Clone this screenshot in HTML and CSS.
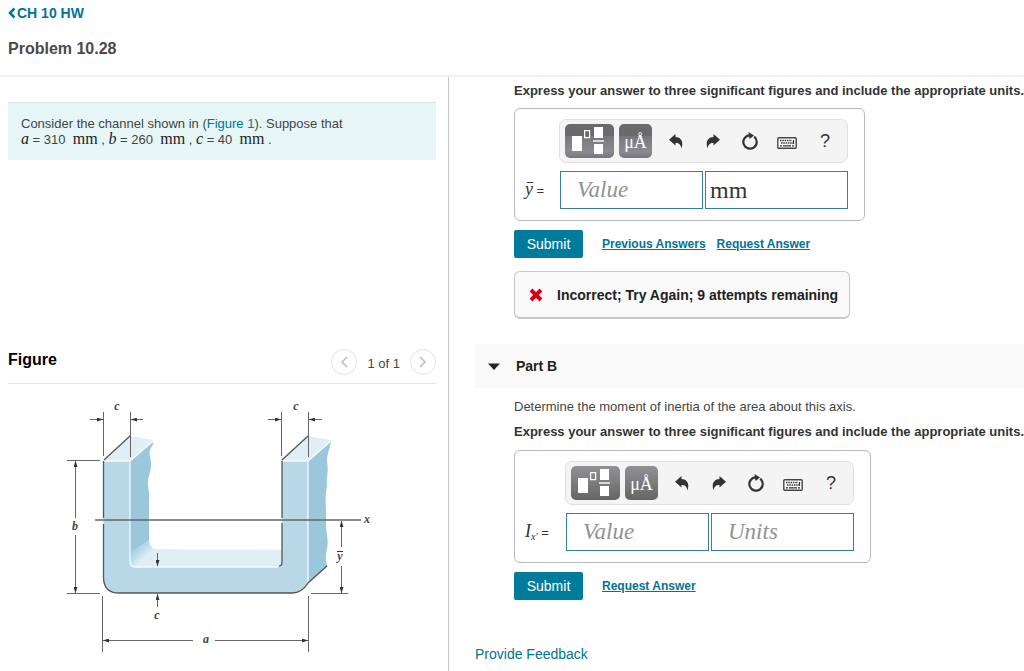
FILE: index.html
```html
<!DOCTYPE html>
<html lang="en">
<head>
<meta charset="utf-8">
<meta name="viewport" content="width=device-width, initial-scale=1">
<title>Problem 10.28</title>
<link rel="stylesheet" href="styles.css">
</head>
<body>
<svg class="sprite" aria-hidden="true">
  <symbol id="templates" viewBox="0 0 49 34">
    <path d="M7 12h10v15H7zM29 3h9v11h-9zM29 20h9v10h-9z" fill="#fff"/>
    <path d="M28 17h11" stroke="#fff" stroke-width="1.4"/>
    <path d="M19.600 6.600h5v7h-5z" fill="none" stroke="#fff" stroke-width="1.200"/>
  </symbol>
  <symbol id="undo" viewBox="0 0 14 15"><path d="M0 5.800 6.500 0v3C12 3 15 8 12.300 14.500 12 11 10.500 9 6.500 9v2.600z" fill="#333"/></symbol>
  <symbol id="redo" viewBox="0 0 14 15"><path d="M14 5.800 7.500 0v3C2 3-1 8 1.700 14.500 2 11 3.500 9 7.500 9v2.600z" fill="#333"/></symbol>
  <symbol id="reset" viewBox="0 0 18 18"><path d="M13.200 4.700A6.700 6.700 0 1 1 8.500 3.300" fill="none" stroke="#333" stroke-width="2.200"/><path d="M7.500 0 13 3.500 8.500 7z" fill="#333"/></symbol>
  <symbol id="keyboard" viewBox="0 0 20 12">
    <rect x=".8" y=".8" width="18.400" height="10.400" rx="1" fill="#fff" stroke="#444" stroke-width="1.400"/>
    <path d="M3 3.500h12M4 6h12" stroke="#333" stroke-width="1.500" stroke-dasharray="1.500 .8"/>
    <path d="M3 8.800h2M6 8.800h8M15 8.800h2M16.500 3v4" stroke="#333" stroke-width="1.300"/>
  </symbol>
</svg>

<header class="page-header">
  <a class="back" href="#"><svg class="back-icon" viewBox="0 0 8 12" aria-hidden="true"><path d="M6.500 1.500 2 6l4.500 4.500" fill="none" stroke="#007495" stroke-width="2.500"/></svg>CH 10 HW</a>
  <h1 class="title">Problem 10.28</h1>
</header>

<main class="columns">
  <section class="problem">
    <div class="prompt">
      Consider the channel shown in (<a href="#figure">Figure 1</a>). Suppose that<br>
      <var>a</var> = 310 &nbsp;<span class="unit">mm</span> , <var>b</var> = 260 &nbsp;<span class="unit">mm</span> , <var>c</var> = 40 &nbsp;<span class="unit">mm</span> .
    </div>

    <div class="figure-bar" id="figure">
      <h2 class="figure-title">Figure</h2>
      <div class="pager">
        <button class="pager-btn" type="button" aria-label="Previous figure"><svg width="8" height="12" viewBox="0 0 8 12"><path d="M7 1 2 6l5 5" fill="none" stroke="#bbb" stroke-width="1.500"/></svg></button>
        <span>1 of 1</span>
        <button class="pager-btn" type="button" aria-label="Next figure"><svg width="8" height="12" viewBox="0 0 8 12"><path d="m1 1 5 5-5 5" fill="none" stroke="#bbb" stroke-width="1.500"/></svg></button>
      </div>
    </div>

    <svg class="diagram" width="320" height="265" viewBox="60 395 320 265" role="img" aria-label="Channel cross-section with dimensions a, b, c">
      <defs>
        <marker id="arrow" viewBox="0 0 6 4" refX="6" refY="2" markerWidth="6" markerHeight="4" markerUnits="userSpaceOnUse" orient="auto-start-reverse"><path d="M0 0 6 2 0 4z" fill="#333"/></marker>
        <linearGradient id="fold" gradientUnits="userSpaceOnUse" x1="132" y1="546" x2="144" y2="559">
          <stop offset="0" stop-color="#9bc7dc"/><stop offset=".5" stop-color="#b8d9e8"/><stop offset="1" stop-color="#e0eff6"/>
        </linearGradient>
      </defs>
      <path d="M130 567V548l19-8c0 7 2 9 5 9 40 1 83 0 128 1v17z" fill="url(#fold)"/>
      <path d="M130 461 153 441c1 6-5 7-3 15 2 10 1 12-1 20-3 9 1 13 0 24v40q0 6 4 9L132 566h-2z" fill="#9bc7dc"/>
      <path d="m130 566 0-14 19-12q0 7 5 9h20l-12 18z" fill="url(#fold)"/>
      <path d="m308 461 23-20c-1 8-4 12-4 20 2 12-1 17 0 26-3 12 0 23-1 37 0 10 3 16 1 25-2 8-1 11 0 17l-19 17z" fill="#9bc7dc"/>
      <path d="M104 461 130 436l23 4v2l-23 19zM282 461l26-25 23 4v1l-23 20z" fill="#e0eff6"/>
      <path d="M103.500 461H130v101q0 5 5 5h143q4 0 4-4V461h26v122q-6 10-16 10H119q-15 0-15.500-15z" fill="#b8d7e7"/>
      <path d="M104 461h26l23-20M130 461v101q0 5 5 5h143M282 461h26l23-20M308 461v122" fill="none" stroke="#f5fbff" stroke-width="1.300"/>
      <path d="M103.500 461v57M103.500 524v54q.5 15 15.500 15h173q10 0 16-10l19-17M104 460l26-24M282 460l26-24M282 461v57M282 523v39q0 4-3 4" fill="none" stroke="#555" stroke-width="1.300"/>
      <g fill="none" stroke="#666" stroke-width="1">
        <path d="M95 520h266" stroke-width="1.300"/>
        <path d="M103.500 412v44M130.500 412v45M281.500 412v44M308.500 412v45M67 460.500h33M67 593.500h33M311 593.500h37M102.500 596v56M308.500 596v56"/>
        <g marker-end="url(#arrow)">
          <path d="M90 419.500h13"/><path d="M143 419.500h-12"/><path d="M268 419.500h13"/><path d="M322 419.500h-13"/>
          <path d="M75.500 518v-57"/><path d="M75.500 535v58"/><path d="M341.500 547v-26"/><path d="M341.500 566v27"/>
          <path d="M157.500 553v13"/><path d="M157.500 607v-13"/><path d="M193 640.500h-90"/><path d="M215 640.500h93"/>
        </g>
      </g>
      <g class="dim">
        <text x="117" y="410">c</text><text x="296" y="410">c</text><text x="75" y="530">b</text><text x="367" y="523">x</text>
        <text x="340" y="560">y</text><text x="157" y="619">c</text><text x="206" y="643">a</text>
      </g>
      <path d="M337 551.500h6" stroke="#333"/>
    </svg>
  </section>

  <section class="answers">
    <form class="part part-a">
      <p class="instruction">Express your answer to three significant figures and include the appropriate units.</p>
      <div class="answer-box">
        <label class="symbol" for="y-value"><span class="math overline">y</span> =</label>
        <div class="editor">
          <div class="toolbar">
            <button class="tool dark" type="button" aria-label="Templates"><svg width="49" height="34"><use href="#templates"/></svg></button>
            <button class="tool dark units" type="button" aria-label="Symbols">μÅ</button>
            <button class="tool" type="button" aria-label="Undo"><svg width="14" height="15"><use href="#undo"/></svg></button>
            <button class="tool" type="button" aria-label="Redo"><svg width="14" height="15"><use href="#redo"/></svg></button>
            <button class="tool" type="button" aria-label="Reset"><svg width="18" height="18"><use href="#reset"/></svg></button>
            <button class="tool" type="button" aria-label="Keyboard shortcuts"><svg class="low" width="20" height="12"><use href="#keyboard"/></svg></button>
            <button class="tool help" type="button" aria-label="Help">?</button>
          </div>
          <div class="fields">
            <input id="y-value" class="field" type="text" placeholder="Value">
            <input class="field filled" type="text" value="mm" aria-label="Units">
          </div>
        </div>
      </div>
      <div class="actions">
        <button class="submit" type="button">Submit</button>
        <a href="#">Previous Answers</a>
        <a href="#">Request Answer</a>
      </div>
      <div class="feedback" role="status">
        <svg width="14" height="14" viewBox="0 0 14 14" aria-hidden="true"><path d="m2 2 10 10M12 2 2 12" stroke="#d6001c" stroke-width="4"/></svg>
        Incorrect; Try Again; 9 attempts remaining
      </div>
    </form>

    <h2 class="part-head"><svg width="12" height="7" viewBox="0 0 12 7" aria-hidden="true"><path d="M0 .5h12L6 7z" fill="#222"/></svg>Part B</h2>

    <form class="part part-b">
      <p class="question">Determine the moment of inertia of the area about this axis.</p>
      <p class="instruction">Express your answer to three significant figures and include the appropriate units.</p>
      <div class="answer-box">
        <label class="symbol" for="i-value"><span class="math">I<sub>x′</sub></span> =</label>
        <div class="editor">
          <div class="toolbar">
            <button class="tool dark" type="button" aria-label="Templates"><svg width="49" height="34"><use href="#templates"/></svg></button>
            <button class="tool dark units" type="button" aria-label="Symbols">μÅ</button>
            <button class="tool" type="button" aria-label="Undo"><svg width="14" height="15"><use href="#undo"/></svg></button>
            <button class="tool" type="button" aria-label="Redo"><svg width="14" height="15"><use href="#redo"/></svg></button>
            <button class="tool" type="button" aria-label="Reset"><svg width="18" height="18"><use href="#reset"/></svg></button>
            <button class="tool" type="button" aria-label="Keyboard shortcuts"><svg class="low" width="20" height="12"><use href="#keyboard"/></svg></button>
            <button class="tool help" type="button" aria-label="Help">?</button>
          </div>
          <div class="fields">
            <input id="i-value" class="field" type="text" placeholder="Value">
            <input class="field" type="text" placeholder="Units" aria-label="Units">
          </div>
        </div>
      </div>
      <div class="actions">
        <button class="submit" type="button">Submit</button>
        <a href="#">Request Answer</a>
      </div>
    </form>

    <a class="provide" href="#">Provide Feedback</a>
  </section>
</main>
</body>
</html>
```

FILE: styles.css
```css
* { box-sizing: border-box; }

body {
  margin: 0;
  min-height: 100vh;
  display: flex;
  flex-direction: column;
  background: #fff;
  color: #444;
  font: 13px/16px "Liberation Sans", Arial, sans-serif;
}

h1, h2, p { margin: 0; }
a { color: #007495; text-decoration: none; }
button { padding: 0; border: 0; background: none; font: inherit; color: inherit; }
.sprite { display: none; }

.page-header {
  height: 77px;
  padding: 5px 8px 0;
  border-bottom: 2px solid #f0f0f0;
}
.back { display: flex; align-items: center; font-size: 14px; font-weight: bold; }
.back-icon { width: 8px; height: 12px; margin-right: 1px; }
.title { margin-top: 18px; font-size: 16px; line-height: 20px; color: #4a4a4a; }

.columns { flex: 1; display: grid; grid-template-columns: 449fr 575fr; }

.problem { padding: 25px 12px 0 8px; border-right: 1px solid #c0c6d0; min-width: 0; }
.prompt {
  padding: 13px 13px 12px;
  border-top: 1px solid #d3e6e8;
  background: #e6f6f7;
}
.prompt var, .unit { font: 16px/0 "Liberation Serif", serif; color: #222; }
.prompt var { font-style: italic; }

.figure-bar {
  display: flex;
  justify-content: space-between;
  margin-top: 189px;
  padding-bottom: 8px;
  border-bottom: 1px solid #e5e5e5;
}
.figure-title { padding-top: 1px; font-size: 16px; line-height: 20px; color: #000; }
.pager { display: flex; align-items: center; gap: 10px; font-size: 13px; }
.pager span { padding-top: 4px; }
.pager-btn {
  display: grid;
  place-items: center;
  width: 26px;
  height: 26px;
  border: 1px solid #e3e3e3;
  border-radius: 50%;
}
.diagram { display: block; margin: 11px 0 0 52px; }
.dim {
  font: italic bold 12px "Liberation Serif", serif;
  fill: #444;
  text-anchor: middle;
}

.answers { min-width: 0; padding: 6px 0 0 26px; }
.part { padding-left: 39px; }
.question { margin-bottom: 9px; }
.instruction { font-weight: bold; color: #333; white-space: nowrap; }

.answer-box {
  display: flex;
  width: fit-content;
  margin-top: 9px;
  padding: 10px 16px 11px 10px;
  border: 1px solid #b8b8b8;
  border-radius: 6px;
}
.part-b .answer-box { margin-top: 10px; }
.symbol { width: 34px; padding-top: 62px; color: #333; white-space: nowrap; }
.part-b .symbol { width: 40px; }
.math { font: italic 18px/16px "Liberation Serif", serif; }
.math sub { font-size: 10px; line-height: 1; vertical-align: -3px; }
.overline { display: inline-block; position: relative; }
.overline::before {
  content: "";
  position: absolute;
  top: 1px;
  left: 2px;
  right: 0;
  border-top: 1px solid #333;
}

.toolbar {
  display: flex;
  align-items: center;
  height: 44px;
  padding: 0 2px 0 5px;
  border: 1px solid #e0e0e0;
  border-radius: 7px;
  background: #f4f4f4;
}
.tool { display: grid; place-items: center; width: 37px; height: 34px; }
.tool.dark {
  width: 49px;
  margin-right: 5px;
  border-radius: 5px;
  background: linear-gradient(#6a696c 0 34%, #77767c 34%, #8b8a91 80%, #77767b);
  color: #fff;
}
.part-b .tool.dark { background: linear-gradient(#929196, #656565); }
.tool.units { width: 33px; padding-top: 2px; font: 18px/32px "Liberation Serif", serif; }
.low { margin-top: 3px; }
.tool.help { width: 40px; font-size: 18px; color: #333; }

.fields { display: flex; gap: 2px; margin: 8px 0 0 1px; }
.field {
  width: 143px;
  height: 38px;
  padding: 0 16px;
  border: 1px solid #2f8596;
  border-radius: 0;
  background: #fff;
  color: #333;
  font: 23px "Liberation Serif", serif;
}
.field.filled { padding: 0 4px; font-size: 24px; }
.field::placeholder { color: #929292; font-style: italic; opacity: 1; }

.actions { display: flex; align-items: center; gap: 11px; margin-top: 9px; }
.actions a { font-size: 12px; font-weight: bold; text-decoration: underline; }
.submit {
  width: 69px;
  height: 28px;
  margin-right: 8px;
  border-radius: 2px;
  background: #007b9c;
  color: #fff;
  font-size: 14px;
}

.feedback {
  display: flex;
  align-items: center;
  gap: 14px;
  width: fit-content;
  height: 48px;
  margin-top: 13px;
  padding: 0 11px 0 14px;
  border: 1px solid #c8c8c8;
  border-bottom-width: 2px;
  border-radius: 6px;
  background: #f9f9f9;
  color: #222;
  font-size: 14px;
  font-weight: bold;
}

.part-head {
  display: flex;
  align-items: center;
  gap: 16px;
  height: 44px;
  margin: 25px 0 11px;
  padding-left: 13px;
  background: #f9f9f9;
  color: #222;
  font-size: 14px;
}
.provide { display: block; width: fit-content; margin-top: 46px; font-size: 14px; }
```
